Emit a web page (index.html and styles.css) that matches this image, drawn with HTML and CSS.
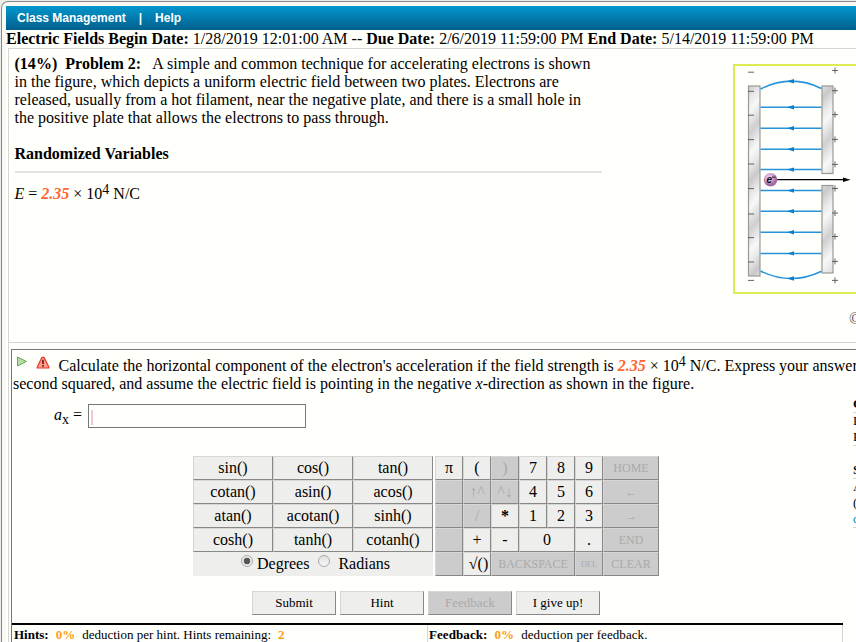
FILE: index.html
```html
<!DOCTYPE html>
<html lang="en">
<head>
<meta charset="utf-8">
<title>Electric Fields</title>
<link rel="stylesheet" href="styles.css">
</head>
<body>
<div class="frame">
<nav class="nav"><span>Class Management</span><span class="sep">|</span><span>Help</span></nav>
<div class="content">
<div class="dates"><b>Electric Fields Begin Date:</b> 1/28/2019 12:01:00 AM -- <b>Due Date:</b> 2/6/2019 11:59:00 PM <b>End Date:</b> 5/14/2019 11:59:00 PM</div>
<main class="sheet">
<section class="problem">
<div class="statement">
<p class="line l1"><b>(14%)&nbsp; Problem 2:</b> &nbsp; A simple and common technique for accelerating electrons is shown</p>
<p class="line">in the figure, which depicts a uniform electric field between two plates. Electrons are</p>
<p class="line">released, usually from a hot filament, near the negative plate, and there is a small hole in</p>
<p class="line">the positive plate that allows the electrons to pass through.</p>
<h2>Randomized Variables</h2>
<p class="variable"><i>E</i> = <em>2.35</em> × 10<sup>4</sup> N/C</p>
</div>
<div class="figure">
<svg width="123" height="230" viewBox="733 64 123 230">
<defs>
<linearGradient id="metal" gradientUnits="userSpaceOnUse" x1="748" y1="86" x2="772" y2="107" spreadMethod="reflect"><stop offset="0" stop-color="#c9c9c9"/><stop offset=".3" stop-color="#e8e8e8"/><stop offset=".55" stop-color="#f8f8f8"/><stop offset="1" stop-color="#cfcfcf"/></linearGradient>
<radialGradient id="ball" cx=".4" cy=".35"><stop offset="0" stop-color="#f0d8ef"/><stop offset=".65" stop-color="#cf9fce"/><stop offset="1" stop-color="#a46ba1"/></radialGradient>
<path id="tip" d="M0 0l7-2.2v4.4z" fill="#0a80cd"/>
</defs>
<rect x="734" y="65" width="145" height="228" fill="#fffffb" stroke="#dcec52" stroke-width="2"/>
<g fill="url(#metal)" stroke="#999" stroke-width="1.2"><rect x="748.5" y="86" width="11.5" height="190"/><rect x="822" y="86" width="11" height="87.500"/><rect x="822" y="185.500" width="11" height="87.500"/></g>
<g stroke="#2694dc" stroke-width="1.500" fill="none"><path d="M760.500 89Q791 73.500 821.500 88.500M760.500 107.300h61M760.500 128.300h61M760.500 149.200h61M760.500 169.600h61M760.500 190.600h61M760.500 211.300h61M760.500 232.200h61M760.500 253.400h61M760.500 271Q791 286 821.500 271.300"/></g>
<g><use href="#tip" x="787" y="81.200"/><use href="#tip" x="787" y="107.300"/><use href="#tip" x="787" y="128.300"/><use href="#tip" x="787" y="149.200"/><use href="#tip" x="787" y="169.600"/><use href="#tip" x="787" y="190.600"/><use href="#tip" x="787" y="211.300"/><use href="#tip" x="787" y="232.200"/><use href="#tip" x="787" y="253.400"/><use href="#tip" x="787" y="278.500"/></g>
<path d="M748 72.200h6M748 91.300h6M748 115.200h6M748 139.600h6M748 164h6M748 188.600h6M748 214h6M748 237.600h6M748 262h6M748 280.400h6M832 70.500h6M835 67.500v6M832 90.700h6M835 87.700v6M832 114.600h6M835 111.600v6M832 139.400h6M835 136.400v6M832 164.400h6M835 161.400v6M832 188.500h6M835 185.500v6M832 213h6M835 210v6M832 236.500h6M835 233.500v6M832 261.400h6M835 258.400v6M832 280.400h6M835 277.400v6" stroke="#555" stroke-width=".9"/>
<path d="M777 179.700h68" stroke="#000" stroke-width="1.300"/><path d="M850.500 179.700l-7.500-2.200v4.400z"/>
<circle cx="770.500" cy="179.700" r="6.800" fill="url(#ball)"/>
<text class="electron" x="766.500" y="183">e</text><path d="M772 177.200h3.500" stroke="#111" stroke-width=".9"/>
</svg>
<span class="credit">©</span>
</div>
</section>
<section class="question">
<div class="prompt">
<p class="line q1"><svg class="play" width="12" height="12" viewBox="0 0 12 12"><path d="M1.500 1L10.500 5.500 1.500 10z" fill="#b6dda8" stroke="#6aaa5e" stroke-linejoin="round"/></svg><svg class="warn" width="14" height="14" viewBox="0 0 14 14"><path d="M6 1.300h2l4.800 9.700v1H1.200v-1z" fill="#ff9c8e" stroke="#e6392b" stroke-width="1.200" stroke-linejoin="round"/><path d="M7 3.800v4.200M7 9v1.700" stroke="#5c0f08" stroke-width="1.500"/></svg><span class="q1text">Calculate the horizontal component of the electron's acceleration if the field strength is <em>2.35</em> × 10<sup>4</sup> N/C. Express your answer</span></p>
<p class="line q2">second squared, and assume the electric field is pointing in the negative <i>x</i>-direction as shown in the figure.</p>
</div>
<div class="work">
<div class="entry">
<div class="answer"><label><i>a</i><sub>x</sub> =</label><div class="field"><span class="caret"></span></div></div>
<div class="pads">
<div class="functions"><span>sin()</span><span>cos()</span><span>tan()</span><span>cotan()</span><span>asin()</span><span>acos()</span><span>atan()</span><span>acotan()</span><span>sinh()</span><span>cosh()</span><span>tanh()</span><span>cotanh()</span>
<div class="angle"><i class="radio on"></i><label class="deg">Degrees</label><i class="radio"></i><label class="rad">Radians</label></div></div>
<div class="keys"><span>π</span><span>(</span><span class="off">)</span><span>7</span><span>8</span><span>9</span><span class="off word">HOME</span>
<span class="off"></span><span class="off arrow">↑^</span><span class="off arrow">^↓</span><span>4</span><span>5</span><span>6</span><span class="off word">←</span>
<span class="off"></span><span class="off">/</span><span class="star">*</span><span>1</span><span>2</span><span>3</span><span class="off word">→</span>
<span class="off"></span><span>+</span><span>-</span><span class="two">0</span><span>.</span><span class="off word">END</span>
<span class="off"></span><span class="root">√()</span><span class="off word three">BACKSPACE</span><span class="off del">DEL</span><span class="off word">CLEAR</span></div>
</div>
<div class="actions"><button>Submit</button><button>Hint</button><button disabled>Feedback</button><button>I give up!</button></div>
</div>
<aside class="side"><b>Grade Summary</b><span class="rule">Deductions</span><span>Potential</span><b class="subs">Submissions</b><span class="rule">Attempts</span><span>(5% per attempt)</span><a>detailed view</a></aside>
</div>
<footer class="notes"><div><b>Hints:</b><strong>0%</strong>deduction per hint. Hints remaining:<strong>2</strong></div><div><b>Feedback:</b><strong>0%</strong>deduction per feedback.</div></footer>
</section>
</main>
</div>
</div>
</body>
</html>
```
FILE: styles.css
```css
* { box-sizing: border-box; }
html, body { margin: 0; height: 642px; overflow: hidden; background: #ececea; }
body { font: 16px/18px "Liberation Serif", serif; color: #000; padding: 1px 0 0 1px; }
p, h2 { margin: 0; }
.frame { height: 641px; overflow: hidden; display: flex; flex-direction: column; padding: 4px 0 0 4px; border: 1px solid #888; border-width: 1px 0 0 1px; border-radius: 7px 0 0 0; background: #f8f8f5; }
.content { flex: 1; min-height: 0; overflow: hidden; display: flex; flex-direction: column; background: #fffffb; }
.nav { height: 24px; flex: none; display: flex; align-items: center; padding-left: 11px; background: linear-gradient(#0197cf, #015f8c); color: #fff; font: bold 12px "Liberation Sans", sans-serif; }
.sep { margin: 0 13px; }
.dates { height: 18px; flex: none; white-space: nowrap; letter-spacing: .005px; }
.sheet { flex: 1; min-height: 0; margin-left: 2px; border: 1px solid #d5d5d2; border-width: 1px 0 0 1px; display: flex; flex-direction: column; }
.problem { height: 294px; flex: none; border-bottom: 1px solid #d5d5d2; display: flex; }
.statement { width: 593px; flex: none; padding: 6px 0 0 5.500px; }
.line { white-space: nowrap; height: 18px; }
.l1 { letter-spacing: .02px; }
h2 { font-size: 16px; line-height: 18px; height: 28px; margin-top: 18px; border-bottom: 2px solid #e4e4e2; }
em { color: #ff6633; font-weight: bold; }
sup, sub { font-size: 14px; line-height: 0; }
sup { vertical-align: 5px; }
sub { vertical-align: -4px; }
.variable { margin-top: 12px; }
.figure { margin: 15px 0 0 131px; flex: none; display: flex; flex-direction: column; width: 123px; }
.electron { font: italic bold 10px "Liberation Sans", sans-serif; fill: #111; }
.credit { margin: 16px 0 0 116px; color: #555; }
.question { flex: 1; min-height: 0; margin: 6px 0 0 2px; border: 1px solid #777; border-width: 1px 0 0 1px; }
.prompt { padding: 7px 0 0 1px; }
.q1 { display: flex; }
.play { margin: -1px 0 0 3px; }
.warn { margin: -1px 0 0 7.500px; }
.q1text { margin-left: 9px; letter-spacing: -.003px; }
.q1 svg { flex: none; }
.work { display: flex; height: 230px; }
.entry { width: 830px; flex: none; }
.answer { display: flex; height: 36px; margin-top: 11px; }
.answer label { width: 34px; margin: 2px 0 0 42px; white-space: nowrap; }
.field { width: 218px; height: 24px; border: 1px solid #777; padding: 5px 0 0 2px; }
.caret { display: block; width: 2px; height: 15px; background: #f6c6d0; }
.pads { display: flex; gap: 2px; margin: 16px 0 0 181px; }
.functions { display: grid; grid-template-columns: repeat(3, 80px); grid-template-rows: repeat(5, 24px); background: #eeeeec; }
.keys { display: grid; grid-template-columns: repeat(6, 28px) 56px; grid-template-rows: repeat(5, 24px); }
.functions > span, .keys > span, button { background: #eeeeec; border: 1px solid; border-color: #d6d6d3 #888 #888 #d6d6d3; display: flex; align-items: center; justify-content: center; white-space: nowrap; }
.keys > .off, button:disabled { background: #ccc; color: #aaa; }
.keys > .word { font-size: 12px; }
.keys > .arrow { font-size: 16px; }
.keys > .star { font-weight: bold; }
.keys > .del { font-size: 8.500px; }
.keys > .root { padding-left: 3px; }
.two { grid-column: span 2; }
.three { grid-column: span 3; }
.angle { grid-column: span 3; display: flex; padding-left: 48px; line-height: 23px; }
.radio { width: 12px; height: 12px; border: 1px solid #aaa; border-radius: 50%; background: linear-gradient(#e0e0e0, #f7f7f7); margin-top: 3px; }
.on { background: radial-gradient(circle, #555 3px, #e9e9e9 3.600px); }
.deg { margin: 0 9px 0 4px; }
.rad { margin-left: 8px; }
.actions { display: flex; gap: 4px; margin: 15px 0 0 240px; }
button { width: 84px; height: 24px; font: 13px "Liberation Serif", serif; padding: 0; color: #000; }
.side { margin: 3px 0 0 11px; flex: 1; min-width: 0; overflow: hidden; display: flex; flex-direction: column; font-size: 13px; line-height: 16px; white-space: nowrap; }
.side .rule { border-top: 1px solid #d5d5d2; }
.side .subs { border-top: 1px solid #d5d5d2; padding-top: 16px; }
.side a { color: #0189c5; border-bottom: 1px solid #d5d5d2; }
.notes { width: 831px; border-top: 2px solid #000; display: flex; font-size: 13px; line-height: 20px; white-space: nowrap; }
.notes div { width: 416px; padding-left: 2px; border-right: 1px solid #d5d5d2; }
.notes div + div { width: 415px; padding-left: 1px; letter-spacing: .08px; }
strong { color: #ff9c12; margin: 0 7px; }
```
